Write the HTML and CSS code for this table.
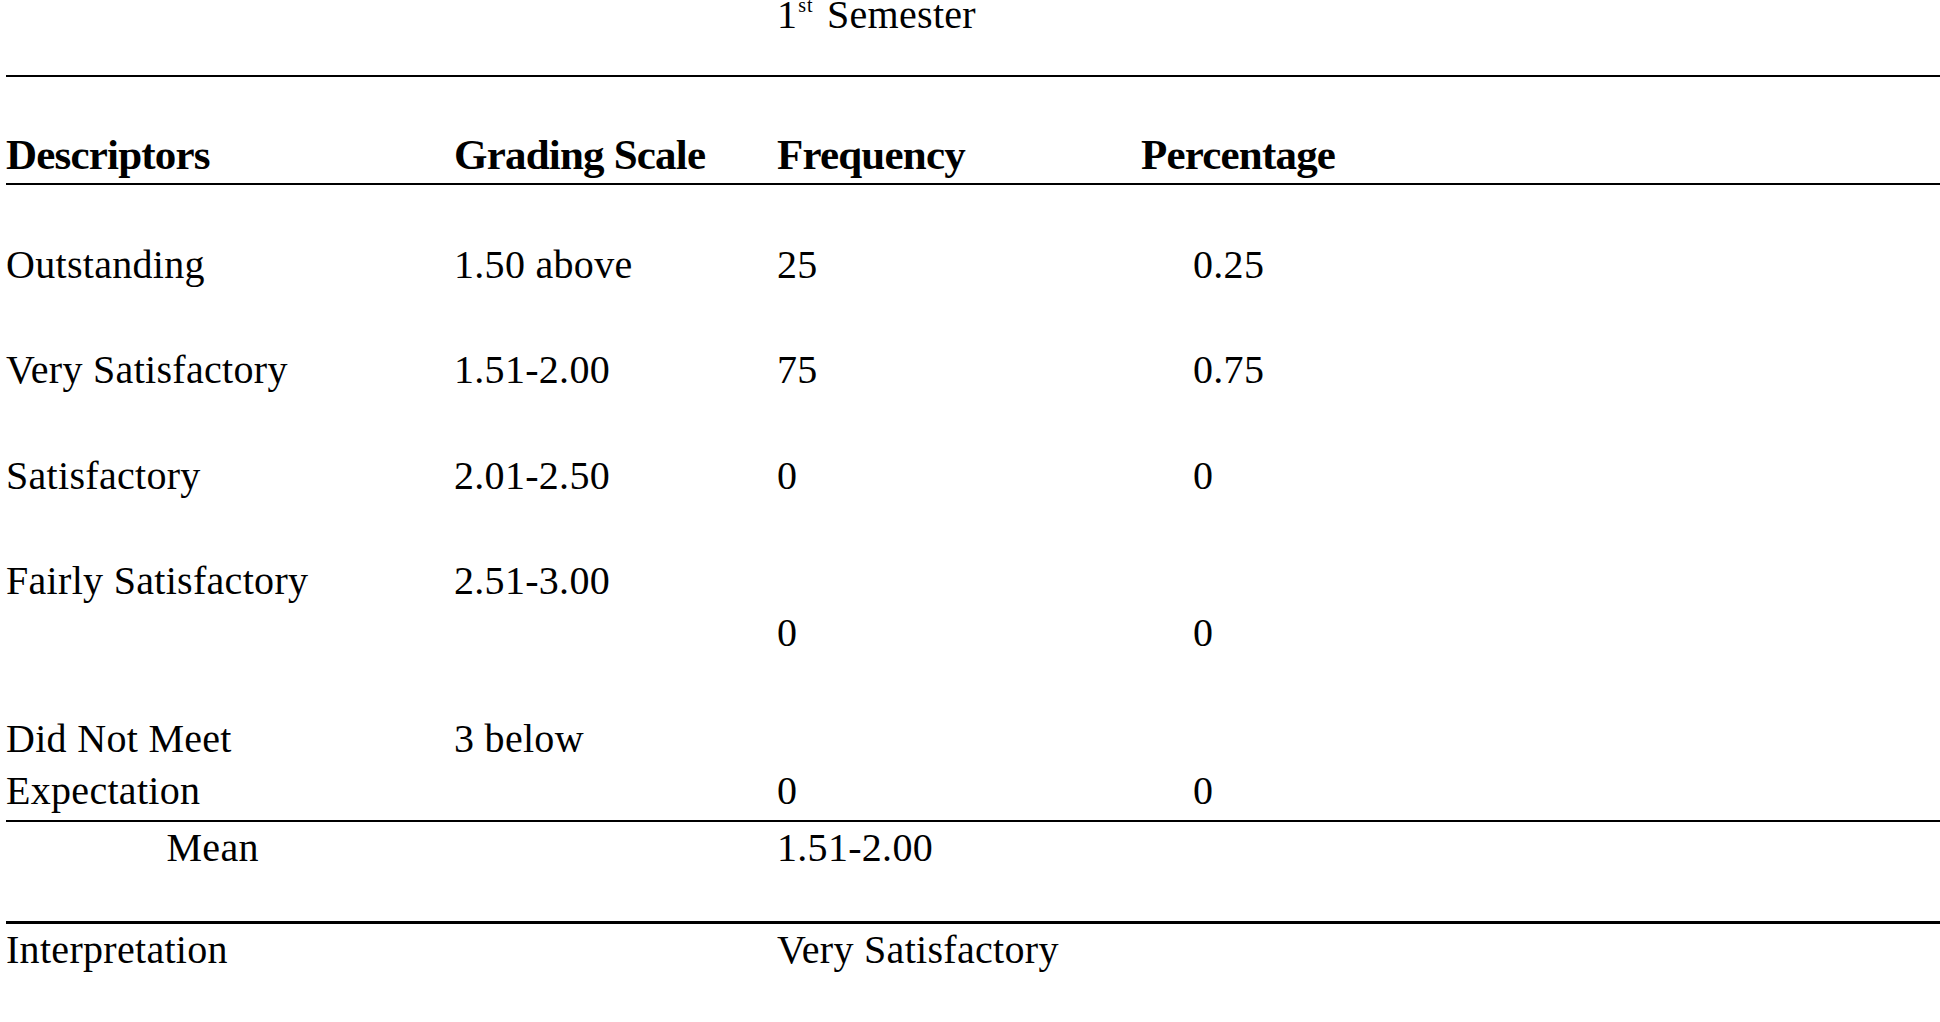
FILE: index.html
```html
<!DOCTYPE html>
<html lang="en">
<head>
<meta charset="utf-8">
<title>1st Semester</title>
<link rel="stylesheet" href="styles.css">
</head>
<body>
<div class="page">
  <div class="cols title">
    <div class="title-text">1<span class="sup">st</span> Semester</div>
  </div>
  <div class="table">
    <div class="cols head">
      <div>Descriptors</div>
      <div>Grading Scale</div>
      <div>Frequency</div>
      <div>Percentage</div>
    </div>
    <div class="cols row">
      <div>Outstanding</div>
      <div>1.50 above</div>
      <div>25</div>
      <div class="pct">0.25</div>
    </div>
    <div class="cols row">
      <div>Very Satisfactory</div>
      <div>1.51-2.00</div>
      <div>75</div>
      <div class="pct">0.75</div>
    </div>
    <div class="cols row">
      <div>Satisfactory</div>
      <div>2.01-2.50</div>
      <div>0</div>
      <div class="pct">0</div>
    </div>
    <div class="cols row">
      <div>Fairly Satisfactory</div>
      <div>2.51-3.00</div>
      <div class="low">0</div>
      <div class="pct low">0</div>
    </div>
    <div class="cols row last">
      <div>Did Not Meet<br>Expectation</div>
      <div>3 below</div>
      <div class="low">0</div>
      <div class="pct low">0</div>
    </div>
    <div class="cols row mean">
      <div class="mean-label">Mean</div>
      <div></div>
      <div>1.51-2.00</div>
      <div></div>
    </div>
    <div class="cols row interp">
      <div>Interpretation</div>
      <div></div>
      <div>Very Satisfactory</div>
      <div></div>
    </div>
  </div>
</div>
</body>
</html>
```

FILE: styles.css
```css
html, body {
  margin: 0;
  padding: 0;
  background: #fff;
}

body {
  font-family: "Liberation Serif", "Times New Roman", serif;
  color: #000;
}

.page {
  box-sizing: border-box;
  width: 1940px;
  padding-left: 6px;
}

.cols {
  display: grid;
  grid-template-columns: 448px 323px 364px 1fr;
}

.title {
  height: 75px;
  font-size: 40px;
  line-height: 30px;
  letter-spacing: 0.3px;
}

.title-text {
  grid-column: 3;
}

.sup {
  font-size: 20px;
  letter-spacing: 1px;
  vertical-align: 16px;
  line-height: 0;
  margin-left: 1px;
  margin-right: 3px;
}

.table {
  border-top: 2px solid #000;
}

.head {
  font-weight: 700;
  font-size: 43px;
  letter-spacing: -0.8px;
  line-height: 48px;
  padding: 54px 0 4px;
  border-bottom: 2px solid #000;
}

.row {
  font-size: 40px;
  letter-spacing: 0.3px;
  line-height: 52px;
  padding-top: 53.5px;
}

.row.last {
  padding-bottom: 3.5px;
  border-bottom: 2px solid #000;
}

.pct {
  padding-left: 52px;
}

.low {
  padding-top: 52px;
}

.row.mean {
  padding-top: 0;
  padding-bottom: 47px;
  border-bottom: 3px solid #000;
}

.mean-label {
  padding-left: 160.5px;
}

.row.interp {
  padding-top: 0;
}
```
